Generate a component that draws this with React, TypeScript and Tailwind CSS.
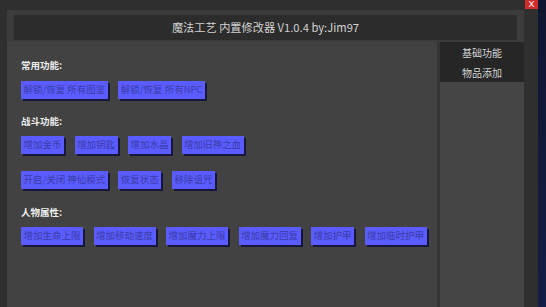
import React from 'react';

const font = { fontFamily: '"Noto Sans CJK SC", "Noto Sans", sans-serif' };

/* ─── Button ─────────────────────────────────────────────── */

const Btn: React.FC<{ label: string }> = ({ label }) => (
    <div className="h-[18px] px-[2.5px] flex items-center bg-[#5a5cff] text-[#3b3da8] text-[9.5px] leading-none whitespace-nowrap shadow-[2px_2px_0_#17173d]">
        {label}
    </div>
);

const Row: React.FC<{ items: string[]; className?: string }> = ({ items, className = '' }) => (
    <div className={`flex gap-[10.5px] ${className}`}>
        {items.map((t) => (
            <Btn key={t} label={t} />
        ))}
    </div>
);

const Label: React.FC<{ text: string; className?: string }> = ({ text, className = '' }) => (
    <div className={`h-[14px] leading-[14px] text-[9.5px] font-bold text-[#eeeeee] ${className}`}>{text}</div>
);

export default function App() {
    return (
        <div className="w-[546px] h-[307px] flex bg-[#2f2f2f] overflow-hidden" style={font}>
            <div className="w-[7px] shrink-0" />

            {/* Window */}
            <div className="w-[517px] shrink-0 mt-[10px] flex flex-col bg-[#3c3c3c] pt-[5px]">
                <div className="ml-[7px] mr-[7px] h-[25px] bg-[#2c2c2c] flex items-center justify-center text-[11.2px] text-[#d2d2d2] whitespace-nowrap">
                    魔法工艺 内置修改器 V1.0.4 by:Jim97
                </div>

                <div className="mt-[2px] flex flex-1">
                    {/* Main content */}
                    <div className="w-[430px] bg-[#424242] pl-[14px] pt-[16px] flex flex-col">
                        <Label text="常用功能:" />
                        <Row className="mt-[9px]" items={['解锁/恢复 所有图鉴', '解锁/恢复 所有NPC']} />
                        <Label className="mt-[15px]" text="战斗功能:" />
                        <Row className="mt-[8px]" items={['增加金币', '增加钥匙', '增加水晶', '增加旧神之血']} />
                        <Row className="mt-[17px]" items={['开启/关闭 神仙模式', '恢复状态', '移除诅咒']} />
                        <Label className="mt-[16px]" text="人物属性:" />
                        <Row
                            className="mt-[8px]"
                            items={['增加生命上限', '增加移动速度', '增加魔力上限', '增加魔力回复', '增加护甲', '增加临时护甲']}
                        />
                    </div>

                    <div className="w-[3px] bg-[#353535]" />

                    {/* Tabs */}
                    <div className="w-[84px] bg-[#454545] flex flex-col">
                        <div className="h-[40px] bg-[#262626] pt-[1px] flex flex-col text-[10px] text-[#d5d5d5]">
                            <div className="h-[20px] flex items-center justify-center">基础功能</div>
                            <div className="h-[20px] flex items-center justify-center">物品添加</div>
                        </div>
                    </div>
                </div>
            </div>

            {/* Right edge + close */}
            <div className="w-[14px] shrink-0 pl-[1px]">
                <div className="w-[13px] h-[9px] bg-[#d22b2b] text-white text-[9px] leading-[9px] flex items-center justify-center" style={{ fontFamily: '"Liberation Sans", sans-serif' }}>
                    X
                </div>
            </div>
            <div className="flex-1 bg-gradient-to-b from-[#0f1630] to-[#141d45]" />
        </div>
    );
}
